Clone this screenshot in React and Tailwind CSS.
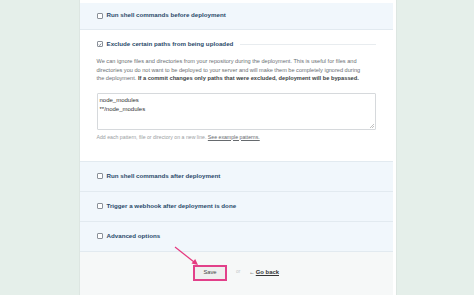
import React from "react";

function Box({ checked }) {
  return (
    <span className="inline-flex items-center justify-center w-[6px] h-[6px] border border-[#8a9099] bg-white rounded-[1px] shrink-0">
      {checked && (
        <svg width="5" height="5" viewBox="0 0 10 10" className="block">
          <path d="M2 5.2 L4.2 7.5 L8.2 2.5" fill="none" stroke="#4a5563" strokeWidth="1.6" />
        </svg>
      )}
    </span>
  );
}

function Option({ label, first }) {
  return (
    <div className={`bg-[#f1f7fc] border-b border-[#e2eaf0] flex items-center pl-[17px] pb-[1px] gap-[4px] ${first ? "h-[27px]" : "h-[30px]"}`}>
      <Box />
      <span className="text-[6.2px] font-bold text-[#2a4a6a] leading-none whitespace-nowrap">{label}</span>
    </div>
  );
}

export default function App() {
  return (
    <div
      className="w-[474px] h-[295px] bg-[#e5efea] flex justify-center overflow-hidden relative"
      style={{ fontFamily: '"Liberation Sans", Arial, sans-serif' }}
    >
      <div className="w-[318px] ml-[1px] h-full bg-white border-l border-r border-[#dde6e2] pr-[3px] pt-[3px] flex flex-col">
        <Option first label="Run shell commands before deployment" />
        <div className="bg-white pl-[17px] pr-[17px] pt-[11px] pb-[21px] flex flex-col border-b border-[#e2eaf0]">
          <div className="flex items-center gap-[4px] h-[6px]">
            <Box checked />
            <span className="text-[6.2px] font-bold text-[#2a4a6a] leading-none whitespace-nowrap">Exclude certain paths from being uploaded</span>
            <div className="flex-1 h-px bg-[#e8ecef] ml-[3px]" />
          </div>
          <p className="mt-[10px] text-[5.6px] leading-[8.5px] text-[#6b6f73] whitespace-nowrap">
            We can ignore files and directories from your repository during the deployment. This is useful for files and
            <br />
            directories you do not want to be deployed to your server and will make them be completely ignored during
            <br />
            the deployment.{" "}
            <span className="font-bold text-[#3b3f43] text-[5.7px]">If a commit changes only paths that were excluded, deployment will be bypassed.</span>
          </p>
          <div className="mt-[10px] h-[37px] border border-[#d6d9dc] rounded-[1px] relative px-[2px] pt-[2px] text-[6px] leading-[9px] text-[#333]">
            <div>node_modules</div>
            <div>**/node_modules</div>
            <svg width="4" height="4" viewBox="0 0 4 4" className="absolute right-[1px] bottom-[1px]">
              <path d="M4 0 L0 4 M4 2 L2 4" stroke="#999" strokeWidth="0.6" />
            </svg>
          </div>
          <div className="mt-[5px] text-[5.2px] leading-none text-[#9a9ea2] whitespace-nowrap">
            Add each pattern, file or directory on a new line.{" "}
            <span className="underline text-[#666a6e]">See example patterns.</span>
          </div>
        </div>
        <Option label="Run shell commands after deployment" />
        <Option label="Trigger a webhook after deployment is done" />
        <Option label="Advanced options" />
        <div className="flex-1 bg-[#f6f8f8] flex justify-center pt-[13px]">
          <div className="flex items-start gap-[9px] h-[16px]">
            <div className="w-[34px] h-[16px] border-2 border-[#e2408a] flex items-center justify-center bg-[#efefef]">
              <span className="text-[5.8px] text-[#444] leading-none">Save</span>
            </div>
            <div className="h-[16px] flex items-center">
              <span className="text-[4.8px] text-[#c4c7c9] leading-none">or</span>
            </div>
            <div className="h-[16px] flex items-center gap-[1px]">
              <span className="text-[5.5px] font-bold text-[#333] leading-none">←</span>
              <span className="text-[5.9px] font-bold text-[#333] underline leading-none">Go back</span>
            </div>
          </div>
        </div>
      </div>
      <svg className="absolute left-0 top-0" width="474" height="295" viewBox="0 0 474 295">
        <line x1="175" y1="247" x2="194" y2="262" stroke="#e5397f" strokeWidth="1.2" />
        <path d="M198 265 L191.5 263.6 L195.2 259 Z" fill="#e5397f" />
      </svg>
    </div>
  );
}
